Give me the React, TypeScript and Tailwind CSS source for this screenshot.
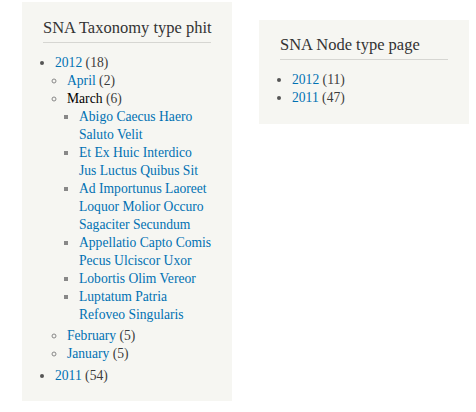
import React from "react";

const serif = { fontFamily: '"Liberation Serif", Georgia, serif' };

function Item({ lines, count, children, dark = false }: { lines: string[]; count?: number; children?: React.ReactNode; dark?: boolean }) {
  return (
    <li className="leading-[18px]">
      <a className={dark ? "text-black" : "text-[#0071b3]"}>
        {lines.map((l, i) => (
          <React.Fragment key={i}>
            {i > 0 && <br />}
            <span className="whitespace-nowrap">{l}</span>
          </React.Fragment>
        ))}
      </a>
      {count !== undefined && <span className="text-[#3b3b3b]"> ({count})</span>}
      {children}
    </li>
  );
}

export default function App() {
  return (
    <div className="min-h-[412px] w-[476px] bg-white text-[13.6px] text-[#3b3b3b]" style={serif}>
      <div className="flex items-start">
        <div className="ml-[22px] mt-[2px] w-[210px] bg-[#f6f6f2] px-[21px] pt-[16px] pb-[16px]">
          <h2 className="whitespace-nowrap border-b border-[#d6d6d2] pb-[4px] text-[16.5px] leading-[20px] text-[#333]">SNA Taxonomy type phit</h2>
          <ul className="mt-[11px] list-disc pl-[12px] marker:text-[#555]">
            <Item lines={["2012"]} count={18}>
              <ul className="mb-[4px] list-[circle] pl-[12px] marker:text-[#888]">
                <Item lines={["April"]} count={2} />
                <Item lines={["March"]} count={6} dark>
                  <ul className="mb-[3px] list-[square] pl-[12px] marker:text-[#555]">
                    <Item lines={["Abigo Caecus Haero", "Saluto Velit"]} />
                    <Item lines={["Et Ex Huic Interdico", "Jus Luctus Quibus Sit"]} />
                    <Item lines={["Ad Importunus Laoreet", "Loquor Molior Occuro", "Sagaciter Secundum"]} />
                    <Item lines={["Appellatio Capto Comis", "Pecus Ulciscor Uxor"]} />
                    <Item lines={["Lobortis Olim Vereor"]} />
                    <Item lines={["Luptatum Patria", "Refoveo Singularis"]} />
                  </ul>
                </Item>
                <Item lines={["February"]} count={5} />
                <Item lines={["January"]} count={5} />
              </ul>
            </Item>
            <Item lines={["2011"]} count={54} />
          </ul>
        </div>
        <div className="ml-[27px] mt-[20px] w-[210px] bg-[#f6f6f2] px-[21px] pt-[15px] pb-[17px]">
          <h2 className="whitespace-nowrap border-b border-[#d6d6d2] pb-[4px] text-[16.5px] leading-[20px] text-[#333]">SNA Node type page</h2>
          <ul className="mt-[11px] list-disc pl-[12px] marker:text-[#555]">
            <Item lines={["2012"]} count={11} />
            <Item lines={["2011"]} count={47} />
          </ul>
        </div>
      </div>
    </div>
  );
}
